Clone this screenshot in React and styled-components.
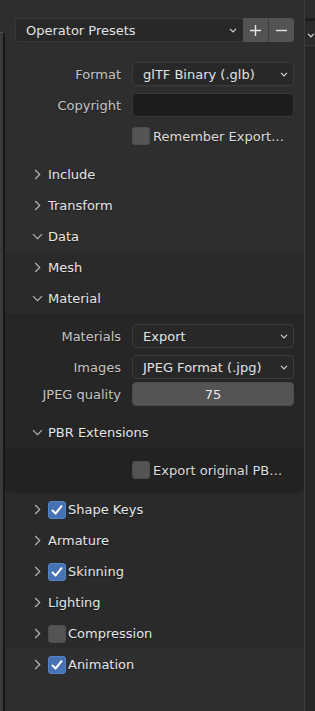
import React from "react";
import styled, { createGlobalStyle } from "styled-components";

const Global = createGlobalStyle`
  html, body { margin: 0; padding: 0; background: #2e2e2e; }
  body { font-family: "DejaVu Sans", "Noto Sans", sans-serif; font-size: 13px; }
`;

const Page = styled.div`
  display: flex;
  width: 315px;
  height: 711px;
  overflow: hidden;
  background: #2e2e2e;
`;

const LeftEdge = styled.div`
  width: 5px;
  display: flex;
  flex-direction: column;
`;

const LeftGap = styled.div`
  height: 32px;
`;

const LeftStrip = styled.div`
  flex: 1;
  background: #3a3a3a;
  border-top: 1px solid #4c4c4c;
  border-right: 2px solid #171717;
  border-top-right-radius: 2px;
`;

const Main = styled.div`
  width: 300px;
  display: flex;
  flex-direction: column;
  background: #2e2e2e;
`;

const RightEdge = styled.div`
  width: 10px;
  display: flex;
  flex-direction: column;
  border-left: 1px solid #3c3c3c;
  box-shadow: inset 1px 0 0 #1a1a1a;
  overflow: hidden;
`;

const RightTop = styled.div`
  height: 18px;
  background: #2c2c2c;
`;

const RightBand = styled.div`
  height: 3px;
  background: #1c1c1c;
`;

const RightItem = styled.div`
  height: 20px;
  display: flex;
  align-items: center;
  padding: 4px 0 0 2px;
  background: #2a2a2a;
  border-bottom: 1px solid #3a3a3a;
`;

const RightRest = styled.div`
  flex: 1;
  background: #272727;
`;

const PresetRow = styled.div`
  display: flex;
  margin: 18px 10px 0;
  height: 24px;
`;

const PresetMenu = styled.div`
  flex: 1;
  display: flex;
  align-items: center;
  justify-content: space-between;
  padding: 0 6px 0 10px;
  background: #282828;
  border: 1px solid #383838;
  border-right: none;
  border-radius: 4px 0 0 4px;
  color: #e2e2e2;
`;

const IconButton = styled.div`
  width: 25px;
  display: flex;
  align-items: center;
  justify-content: center;
  background: #535353;
  border-left: ${(p) => (p.$divider ? "1px solid #3e3e3e" : "none")};
  border-radius: ${(p) => (p.$last ? "0 4px 4px 0" : "0")};
`;

const PropsBlock = styled.div`
  display: flex;
  flex-direction: column;
  gap: ${(p) => p.$gap || 7}px;
  padding: ${(p) => p.$pad || "0"};
`;

const PropRow = styled.div`
  display: grid;
  grid-template-columns: 1fr 162px;
  column-gap: 11px;
  align-items: center;
  height: 24px;
  padding: 0 10px;
`;

const Label = styled.div`
  text-align: right;
  color: #c4c4c4;
  white-space: nowrap;
  text-shadow: 0 1px 1px rgba(0, 0, 0, 0.35);
`;

const Menu = styled.div`
  height: 24px;
  box-sizing: border-box;
  display: flex;
  align-items: center;
  justify-content: space-between;
  padding: 0 5px 0 10px;
  background: #282828;
  border: 1px solid #3b3b3b;
  border-radius: 4px;
  color: #e2e2e2;
  white-space: nowrap;
`;

const TextField = styled.div`
  height: 24px;
  box-sizing: border-box;
  background: #1d1d1d;
  border: 1px solid #383838;
  border-radius: 4px;
`;

const Slider = styled.div`
  height: 24px;
  box-sizing: border-box;
  display: flex;
  align-items: center;
  justify-content: center;
  background: #545454;
  border: 1px solid #4a4a4a;
  border-radius: 4px;
  color: #e8e8e8;
`;

const CheckCell = styled.div`
  grid-column: 2;
  display: flex;
  align-items: center;
  gap: 3px;
  color: #dcdcdc;
  white-space: nowrap;
  text-shadow: 0 1px 1px rgba(0, 0, 0, 0.35);
`;

const Box = styled.div`
  width: 18px;
  height: 18px;
  box-sizing: border-box;
  flex: none;
  display: flex;
  align-items: center;
  justify-content: center;
  border-radius: 3px;
  background: ${(p) => (p.$on ? "#4772b3" : "#545454")};
  border: 1px solid ${(p) => (p.$on ? "#5582c2" : "#4c4c4c")};
`;

const Header = styled.div`
  display: flex;
  align-items: center;
  height: 31px;
  flex: none;
  padding-left: 27px;
  gap: 5px;
  color: #e6e6e6;
  text-shadow: 0 1px 1px rgba(0, 0, 0, 0.45);
  margin-top: ${(p) => p.$mt || 0}px;
`;

const Slot = styled.div`
  width: 11px;
  display: flex;
  justify-content: center;
  align-items: center;
`;

const HeadLabel = styled.div`
  display: flex;
  align-items: center;
  gap: 2px;
`;

const Sub = styled.div`
  display: flex;
  flex-direction: column;
  background: ${(p) => p.$bg};
  border-radius: 0 0 6px 6px;
  padding: ${(p) => p.$pad || "0"};
`;

const Chev = ({ open }) =>
  open ? (
    <svg width="11" height="7" viewBox="0 0 11 7">
      <path d="M1 1.2 L5.5 5.7 L10 1.2" fill="none" stroke="#b4b4b4" strokeWidth="1.2" />
    </svg>
  ) : (
    <svg width="7" height="11" viewBox="0 0 7 11">
      <path d="M1.2 1 L5.7 5.5 L1.2 10" fill="none" stroke="#b4b4b4" strokeWidth="1.2" />
    </svg>
  );

const Down = () => (
  <svg width="8" height="5" viewBox="0 0 8 5">
    <path d="M1 0.8 L4 3.8 L7 0.8" fill="none" stroke="#d0d0d0" strokeWidth="1.2" />
  </svg>
);

const Tick = () => (
  <svg width="14" height="14" viewBox="0 0 14 14">
    <path d="M2.5 7.5 L5.6 10.5 L11.5 3.2" fill="none" stroke="#ffffff" strokeWidth="2" strokeLinecap="round" strokeLinejoin="round" />
  </svg>
);

const Check = ({ on }) => <Box $on={on}>{on && <Tick />}</Box>;

const Section = ({ title, open, check, mt }) => (
  <Header $mt={mt}>
    <Slot>
      <Chev open={open} />
    </Slot>
    <HeadLabel>
      {check !== undefined && <Check on={check} />}
      <span>{title}</span>
    </HeadLabel>
  </Header>
);

export default function App() {
  return (
    <>
      <Global />
      <Page>
        <LeftEdge>
          <LeftGap />
          <LeftStrip />
        </LeftEdge>
        <Main>
          <PresetRow>
            <PresetMenu>
              <span>Operator Presets</span>
              <Down />
            </PresetMenu>
            <IconButton>
              <svg width="13" height="13" viewBox="0 0 13 13">
                <path d="M6.5 1 V12 M1 6.5 H12" stroke="#e6e6e6" strokeWidth="1.4" />
              </svg>
            </IconButton>
            <IconButton $divider $last>
              <svg width="13" height="13" viewBox="0 0 13 13">
                <path d="M1 6.5 H12" stroke="#e6e6e6" strokeWidth="1.4" />
              </svg>
            </IconButton>
          </PresetRow>

          <PropsBlock $pad="20px 0 11px">
            <PropRow>
              <Label>Format</Label>
              <Menu>
                <span>glTF Binary (.glb)</span>
                <Down />
              </Menu>
            </PropRow>
            <PropRow>
              <Label>Copyright</Label>
              <TextField />
            </PropRow>
            <PropRow>
              <CheckCell>
                <Check on={false} />
                <span>Remember Export…</span>
              </CheckCell>
            </PropRow>
          </PropsBlock>

          <Section title="Include" />
          <Section title="Transform" />
          <Section title="Data" open />
          <Sub $bg="#2a2a2a">
            <Section title="Mesh" />
            <Section title="Material" open />
            <Sub $bg="#262626" $pad="10px 0 2px">
              <PropsBlock $gap={7}>
                <PropRow>
                  <Label>Materials</Label>
                  <Menu>
                    <span>Export</span>
                    <Down />
                  </Menu>
                </PropRow>
                <PropsBlock $gap={3}>
                  <PropRow>
                    <Label>Images</Label>
                    <Menu>
                      <span>JPEG Format (.jpg)</span>
                      <Down />
                    </Menu>
                  </PropRow>
                  <PropRow>
                    <Label>JPEG quality</Label>
                    <Slider>75</Slider>
                  </PropRow>
                </PropsBlock>
              </PropsBlock>
              <Section title="PBR Extensions" open mt={11} />
              <Sub $bg="#222222" $pad="10px 0 10px">
                <PropRow>
                  <CheckCell>
                    <Check on={false} />
                    <span>Export original PB…</span>
                  </CheckCell>
                </PropRow>
              </Sub>
            </Sub>
            <Section title="Shape Keys" check />
            <Section title="Armature" />
            <Section title="Skinning" check />
            <Section title="Lighting" />
            <Section title="Compression" check={false} />
          </Sub>
          <Section title="Animation" check />
        </Main>
        <RightEdge>
          <RightTop />
          <RightBand />
          <RightItem>
            <Down />
          </RightItem>
          <RightRest />
        </RightEdge>
      </Page>
    </>
  );
}
